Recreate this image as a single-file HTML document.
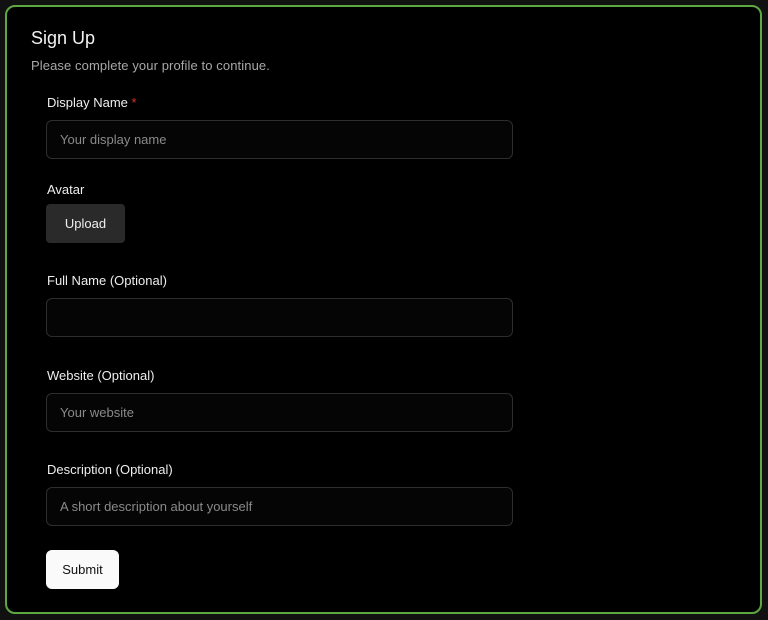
<!DOCTYPE html>
<html><head><style>
html,body{margin:0;padding:0;width:768px;height:620px;background:#111;overflow:hidden;font-family:"Liberation Sans",sans-serif;}
.card{position:absolute;left:5px;top:5px;width:753px;height:605px;border:2px solid #5ea843;border-radius:10px;background:#000;}
.abs{position:absolute;}
h1{position:absolute;left:24px;top:21px;margin:0;font-size:18px;font-weight:normal;color:#f2f2f2;}
.sub{left:24px;top:51px;font-size:13px;color:#a8a8a8;letter-spacing:0.1px;}
.lbl{left:40px;font-size:13px;color:#eee;}
.inp{left:39px;width:465px;height:37px;border:1px solid #2e2e2e;border-radius:6px;background:#050505;box-sizing:content-box;}
.ph{position:absolute;left:13px;top:11px;font-size:13px;color:#8a8a8a;}
.up{left:39px;top:197px;width:79px;height:39px;background:#2a2a2a;border-radius:4px;color:#f0f0f0;font-size:13px;text-align:center;line-height:39px;}
.sb{left:39px;top:543px;width:73px;height:39px;background:#fafafa;border-radius:6px;color:#111;font-size:13px;text-align:center;line-height:39px;}
</style></head><body>
<div class="card">
<h1>Sign Up</h1>
<div class="abs sub">Please complete your profile to continue.</div>
<div class="abs lbl" style="top:88px">Display Name <span style="color:#e03030">*</span></div>
<div class="abs inp" style="top:113px"><span class="ph">Your display name</span></div>
<div class="abs lbl" style="top:175px">Avatar</div>
<div class="abs up">Upload</div>
<div class="abs lbl" style="top:266px">Full Name (Optional)</div>
<div class="abs inp" style="top:291px"></div>
<div class="abs lbl" style="top:361px">Website (Optional)</div>
<div class="abs inp" style="top:386px"><span class="ph">Your website</span></div>
<div class="abs lbl" style="top:455px">Description (Optional)</div>
<div class="abs inp" style="top:480px"><span class="ph">A short description about yourself</span></div>
<div class="abs sb">Submit</div>
</div>
</body></html>
